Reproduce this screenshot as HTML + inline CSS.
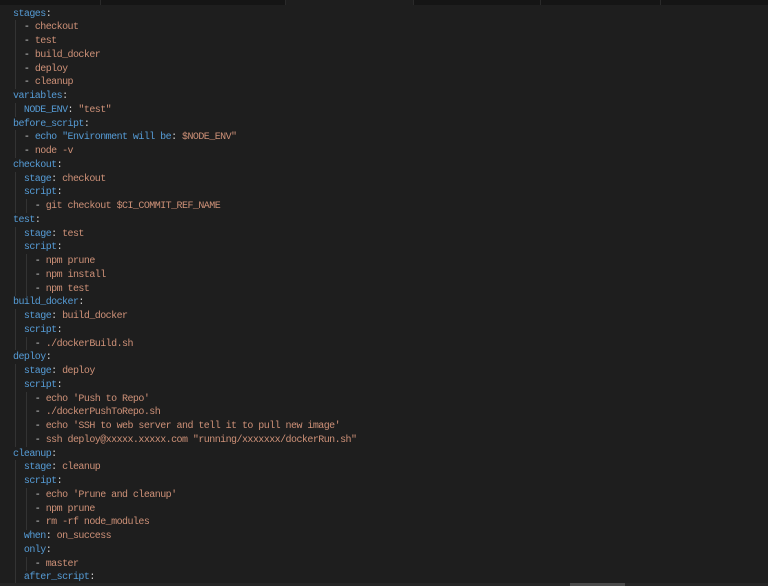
<!DOCTYPE html>
<html><head><meta charset="utf-8"><style>
html,body{margin:0;padding:0;background:#1e1e1e;width:768px;height:586px;overflow:hidden}
.top{position:absolute;top:0;left:0;width:768px;height:5px;background:#151515}
.top div{position:absolute;top:0;height:5px;border-left:1px solid #2a2a2a}
pre{position:absolute;left:13px;top:7.5px;margin:0;font-family:"Liberation Mono",monospace;font-size:10px;letter-spacing:-0.55px;line-height:13.75px;color:#d4d4d4}
.k{color:#569cd6}.s{color:#ce9178}
.g{position:absolute;width:1px;background:#333}
.bot{position:absolute;left:0;top:583px;width:768px;height:3px;background:#252525}
.thumb{position:absolute;left:570px;top:583px;width:55px;height:3px;background:#4a4a4a}
</style></head><body>
<div class="top"><div style="left:100px"></div><div style="left:285px;width:128px;background:#1e1e1e"></div><div style="left:413px"></div><div style="left:540px"></div><div style="left:660px"></div></div>
<div class="g" style="left:15px;top:20px;height:69px"></div>
<div class="g" style="left:15px;top:103px;height:14px"></div>
<div class="g" style="left:15px;top:130px;height:28px"></div>
<div class="g" style="left:15px;top:172px;height:41px"></div>
<div class="g" style="left:26px;top:199px;height:14px"></div>
<div class="g" style="left:15px;top:227px;height:69px"></div>
<div class="g" style="left:26px;top:254px;height:42px"></div>
<div class="g" style="left:15px;top:309px;height:41px"></div>
<div class="g" style="left:26px;top:337px;height:13px"></div>
<div class="g" style="left:15px;top:364px;height:83px"></div>
<div class="g" style="left:26px;top:392px;height:55px"></div>
<div class="g" style="left:15px;top:460px;height:123px"></div>
<div class="g" style="left:26px;top:488px;height:42px"></div>
<div class="g" style="left:26px;top:557px;height:14px"></div>
<pre><span class="k">stages</span>:
  - <span class="s">checkout</span>
  - <span class="s">test</span>
  - <span class="s">build_docker</span>
  - <span class="s">deploy</span>
  - <span class="s">cleanup</span>
<span class="k">variables</span>:
  <span class="k">NODE_ENV</span>: <span class="s">"test"</span>
<span class="k">before_script</span>:
  - <span class="k">echo "Environment will be</span>: <span class="s">$NODE_ENV"</span>
  - <span class="s">node -v</span>
<span class="k">checkout</span>:
  <span class="k">stage</span>: <span class="s">checkout</span>
  <span class="k">script</span>:
    - <span class="s">git checkout $CI_COMMIT_REF_NAME</span>
<span class="k">test</span>:
  <span class="k">stage</span>: <span class="s">test</span>
  <span class="k">script</span>:
    - <span class="s">npm prune</span>
    - <span class="s">npm install</span>
    - <span class="s">npm test</span>
<span class="k">build_docker</span>:
  <span class="k">stage</span>: <span class="s">build_docker</span>
  <span class="k">script</span>:
    - <span class="s">./dockerBuild.sh</span>
<span class="k">deploy</span>:
  <span class="k">stage</span>: <span class="s">deploy</span>
  <span class="k">script</span>:
    - <span class="s">echo 'Push to Repo'</span>
    - <span class="s">./dockerPushToRepo.sh</span>
    - <span class="s">echo 'SSH to web server and tell it to pull new image'</span>
    - <span class="s">ssh deploy@xxxxx.xxxxx.com "running/xxxxxxx/dockerRun.sh"</span>
<span class="k">cleanup</span>:
  <span class="k">stage</span>: <span class="s">cleanup</span>
  <span class="k">script</span>:
    - <span class="s">echo 'Prune and cleanup'</span>
    - <span class="s">npm prune</span>
    - <span class="s">rm -rf node_modules</span>
  <span class="k">when</span>: <span class="s">on_success</span>
  <span class="k">only</span>:
    - <span class="s">master</span>
  <span class="k">after_script</span>:</pre>
<div class="bot"></div><div class="thumb"></div>
</body></html>
